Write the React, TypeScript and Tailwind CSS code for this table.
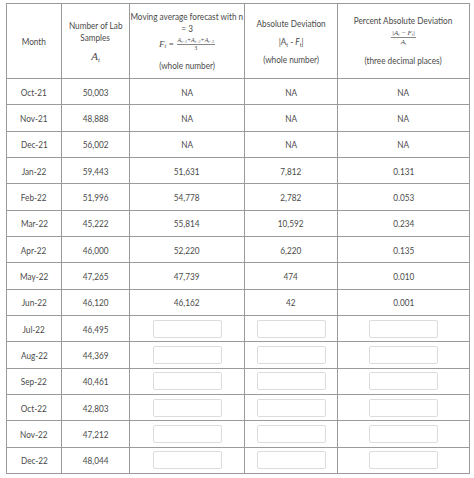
import React from 'react';

type Row = { month: string; samples: string; forecast?: string; abs?: string; pct?: string };

const rows: Row[] = [
  { month: 'Oct-21', samples: '50,003', forecast: 'NA', abs: 'NA', pct: 'NA' },
  { month: 'Nov-21', samples: '48,888', forecast: 'NA', abs: 'NA', pct: 'NA' },
  { month: 'Dec-21', samples: '56,002', forecast: 'NA', abs: 'NA', pct: 'NA' },
  { month: 'Jan-22', samples: '59,443', forecast: '51,631', abs: '7,812', pct: '0.131' },
  { month: 'Feb-22', samples: '51,996', forecast: '54,778', abs: '2,782', pct: '0.053' },
  { month: 'Mar-22', samples: '45,222', forecast: '55,814', abs: '10,592', pct: '0.234' },
  { month: 'Apr-22', samples: '46,000', forecast: '52,220', abs: '6,220', pct: '0.135' },
  { month: 'May-22', samples: '47,265', forecast: '47,739', abs: '474', pct: '0.010' },
  { month: 'Jun-22', samples: '46,120', forecast: '46,162', abs: '42', pct: '0.001' },
  { month: 'Jul-22', samples: '46,495' },
  { month: 'Aug-22', samples: '44,369' },
  { month: 'Sep-22', samples: '40,461' },
  { month: 'Oct-22', samples: '42,803' },
  { month: 'Nov-22', samples: '47,212' },
  { month: 'Dec-22', samples: '48,044' },
];

// the text in the picture is a little narrower than Lato, so squeeze it horizontally
const T = ({ children, className = '' }: { children: React.ReactNode; className?: string }) => (
  <div className={`flex justify-center leading-[12px] ${className}`}>
    <span className="shrink-0 whitespace-nowrap scale-x-[0.82]">{children}</span>
  </div>
);

const Box = () => (
  <div className="mx-auto h-[18px] w-[69px] rounded-[2px] border border-[#dcdcdc] bg-white" />
);

const Cell = ({ value }: { value?: string }) => (
  <td className="border border-[#9a9a9a] p-0 text-center align-middle">
    {value !== undefined ? <T>{value}</T> : <Box />}
  </td>
);

export default function App() {
  return (
    <div className="h-[478px] w-[474px] bg-white pl-[6px] pt-[3px] font-['Lato',sans-serif] text-[10px] text-[#4a4a4a]">
      <table className="w-[463px] table-fixed border-collapse">
        <colgroup>
          <col className="w-[55px]" />
          <col className="w-[68px]" />
          <col className="w-[115px]" />
          <col className="w-[93px]" />
          <col className="w-[132px]" />
        </colgroup>
        <thead>
          <tr className="h-[75px]">
            <th className="border border-[#9a9a9a] p-0 text-center font-normal">
              <T>Month</T>
            </th>
            <th className="border border-[#9a9a9a] p-0 text-center font-normal">
              <T className="mt-[2px]">Number of Lab</T>
              <T>Samples</T>
              <div className="mt-[5px] font-['Liberation_Serif',serif] text-[11px] italic">
                A<sub className="text-[7px]">t</sub>
              </div>
            </th>
            <th className="border border-[#9a9a9a] p-0 text-center font-normal">
              <T className="-mt-[1px]">Moving average forecast with n</T>
              <T>= 3</T>
              <div className="mt-[3px] flex items-center justify-center gap-[3px] font-['Liberation_Serif',serif]">
                <span className="text-[9px] italic">F<sub className="text-[6px]">t</sub></span>
                <span className="text-[8px]">=</span>
                <span className="inline-flex flex-col items-center text-[6px] leading-[7px]">
                  <span className="border-b border-[#888] px-[1px] italic">
                    A<sub className="text-[4px]">t−1</sub>+A<sub className="text-[4px]">t−2</sub>+A<sub className="text-[4px]">t−3</sub>
                  </span>
                  <span>3</span>
                </span>
              </div>
              <T className="mt-[7px]">(whole number)</T>
            </th>
            <th className="border border-[#9a9a9a] p-0 text-center font-normal">
              <T>Absolute Deviation</T>
              <T className="mt-[6px]">
                |A<sub className="text-[6px]">t</sub> - <span className="italic">F</span><sub className="text-[6px]">t</sub>|
              </T>
              <T className="mt-[6px]">(whole number)</T>
            </th>
            <th className="border border-[#9a9a9a] p-0 text-center font-normal">
              <T className="-mt-[3px]">Percent Absolute Deviation</T>
              <div className="mt-[3px] flex justify-center font-['Liberation_Serif',serif] text-[7px] italic">
                <span className="inline-flex flex-col items-center leading-[8px]">
                  <span className="border-b border-[#888] px-[1px]">
                    |A<sub className="text-[4px]">t</sub> − F<sub className="text-[4px]">t</sub>|
                  </span>
                  <span>A<sub className="text-[4px]">t</sub></span>
                </span>
              </div>
              <T className="mt-[8px]">(three decimal places)</T>
            </th>
          </tr>
        </thead>
        <tbody>
          {rows.map((r) => (
            <tr key={r.month} className="h-[26.33px]">
              <Cell value={r.month} />
              <Cell value={r.samples} />
              <Cell value={r.forecast} />
              <Cell value={r.abs} />
              <Cell value={r.pct} />
            </tr>
          ))}
        </tbody>
      </table>
    </div>
  );
}
